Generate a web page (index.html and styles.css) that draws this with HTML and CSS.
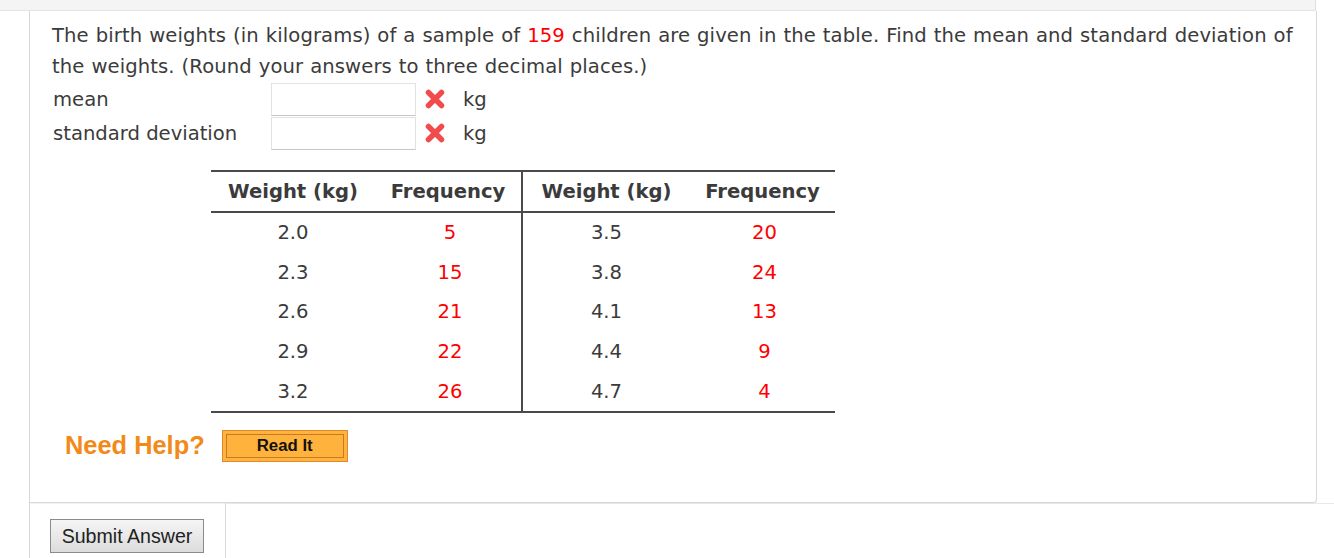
FILE: index.html
```html
<!DOCTYPE html>
<html>
<head>
<meta charset="utf-8">
<link rel="stylesheet" href="styles.css">
</head>
<body>
<div class="top-strip"></div>
<div class="panel">
  <p class="question">The birth weights (in kilograms) of a sample of <span class="red">159</span> children are given in the table. Find the mean and standard deviation of the weights. (Round your answers to three decimal places.)</p>
  <div class="answers">
    <div class="label">mean</div>
    <div class="field"><span class="box"></span><svg class="wrong" width="22" height="20" viewBox="0 0 22 20"><path d="M4.5 3.5 L17.5 16.5 M17.5 3.5 L4.5 16.5" stroke="#f24b4b" stroke-width="5.5" stroke-linecap="round"/></svg><span class="unit">kg</span></div>
    <div class="label">standard deviation</div>
    <div class="field"><span class="box"></span><svg class="wrong" width="22" height="20" viewBox="0 0 22 20"><path d="M4.5 3.5 L17.5 16.5 M17.5 3.5 L4.5 16.5" stroke="#f24b4b" stroke-width="5.5" stroke-linecap="round"/></svg><span class="unit">kg</span></div>
  </div>
  <table class="data">
    <thead>
      <tr><th class="c1">Weight (kg)</th><th class="c2">Frequency</th><th class="c3 divider">Weight (kg)</th><th class="c4">Frequency</th></tr>
    </thead>
    <tbody>
      <tr><td>2.0</td><td class="red">5</td><td class="divider">3.5</td><td class="red">20</td></tr>
      <tr><td>2.3</td><td class="red">15</td><td class="divider">3.8</td><td class="red">24</td></tr>
      <tr><td>2.6</td><td class="red">21</td><td class="divider">4.1</td><td class="red">13</td></tr>
      <tr><td>2.9</td><td class="red">22</td><td class="divider">4.4</td><td class="red">9</td></tr>
      <tr><td>3.2</td><td class="red">26</td><td class="divider">4.7</td><td class="red">4</td></tr>
    </tbody>
  </table>
  <div class="help">
    <span class="need">Need Help?</span>
    <span class="readit"><span class="readit-inner">Read It</span></span>
  </div>
</div>
<div class="lower">
  <div class="submit-cell"><button class="submit">Submit Answer</button></div>
  <div class="side-box"></div>
</div>
</body>
</html>
```

FILE: styles.css
```css
html, body {
  margin: 0;
  padding: 0;
  background: #ffffff;
}
body {
  font-family: "DejaVu Sans", Verdana, sans-serif;
  color: #3b3b3b;
  width: 1334px;
  height: 558px;
  overflow: hidden;
}
.top-strip {
  width: 1315px;
  height: 10px;
  background: #f4f4f4;
  border-bottom: 1px solid #e4e4e4;
  border-right: 1px solid #e0e0e0;
}
.panel {
  margin-left: 29px;
  width: 1254px;
  height: 491px;
  padding: 0 10px 0 22px;
  border-left: 1px solid #d8d8d8;
  border-right: 1px solid #d8d8d8;
  border-bottom: 1px solid #d8d8d8;
  border-bottom-right-radius: 4px;
  box-shadow: 0 1px 1px rgba(0,0,0,0.06);
}
.question {
  margin: 0;
  padding-top: 9px;
  font-size: 19.6px;
  line-height: 31px;
  word-spacing: 0.6px;
  letter-spacing: 0.1px;
}
.red { color: #ff0000; }
.answers {
  display: grid;
  grid-template-columns: 218px auto;
  grid-auto-rows: 34px;
  align-items: center;
  font-size: 19.6px;
  margin-left: 1px;
}
.field {
  display: flex;
  align-items: center;
}
.box {
  display: block;
  width: 143px;
  height: 31px;
  border: 1px solid #e2e2e2;
  border-bottom: 1px solid #c8c8c8;
  background: #fff;
}
.wrong {
  margin-left: 8px;
  display: block;
}
.unit {
  margin-left: 17px;
}
.data {
  margin-top: 20px;
  margin-left: 159px;
  border-collapse: collapse;
  font-size: 19.6px;
}
.data th {
  font-weight: bold;
  height: 39px;
  padding: 0;
  border-top: 2px solid #4a4a4a;
  border-bottom: 2px solid #4a4a4a;
  text-align: center;
}
.data td {
  height: 39.6px;
  padding: 0;
  text-align: center;
}
.data tbody tr:last-child td {
  border-bottom: 2px solid #4a4a4a;
}
.c1 { width: 164px; }
.c2 { width: 146px; }
.c3 { width: 167px; }
.c4 { width: 145px; }
.divider {
  border-left: 2px solid #4a4a4a;
}
.data td:nth-child(2), .data td:nth-child(4) {
  padding-left: 4px;
}
.help {
  display: flex;
  align-items: center;
  margin-top: 17px;
  margin-left: 13px;
}
.need {
  font-family: "Liberation Sans", Arial, sans-serif;
  font-weight: bold;
  font-size: 25.4px;
  color: #f28a1a;
}
.readit {
  display: block;
  margin-left: 17px;
  width: 126px;
  height: 32px;
  border: 1px solid #e18a2d;
  background: #ffb23c;
  padding: 3px;
  box-sizing: border-box;
}
.readit-inner {
  display: flex;
  align-items: center;
  justify-content: center;
  height: 100%;
  border: 1px solid #c67a26;
  box-sizing: border-box;
  font-family: "Liberation Sans", Arial, sans-serif;
  font-weight: bold;
  font-size: 16.8px;
  color: #111;
}
.lower {
  display: flex;
  margin-left: 29px;
  height: 55px;
  border-left: 1px solid #d8d8d8;
}
.submit-cell {
  width: 195px;
  padding: 16px 0 0 20px;
  box-sizing: border-box;
}
.submit {
  display: block;
  width: 154px;
  height: 34px;
  padding: 0;
  border: 1px solid #8a8a8a;
  background: linear-gradient(#f5f5f5, #dcdcdc);
  font-family: "Liberation Sans", Arial, sans-serif;
  font-size: 19.6px;
  color: #222;
  border-radius: 0;
}
.side-box {
  flex: 1;
  border-left: 1px solid #d8d8d8;
  border-top: 1px solid #e8e8e8;
}
```
